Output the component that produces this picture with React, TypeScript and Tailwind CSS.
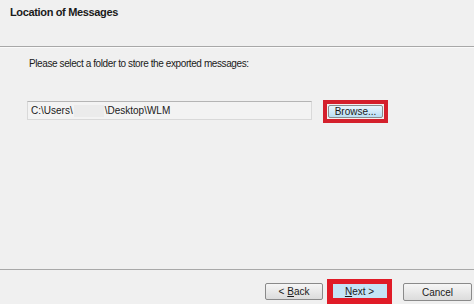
import React from "react";

export default function App() {
  const font = { fontFamily: '"Liberation Sans", Arial, sans-serif' };
  return (
    <div className="w-[474px] h-[304px] bg-[#f0f0f0] flex flex-col overflow-hidden text-[#1a1a1a]" style={font}>
      <div className="h-[47px] bg-[#f0f0f0] border-b border-[#a8a8a8] pl-[10px] pt-[5px]">
        <div className="text-[11px] font-bold leading-[14px] tracking-[-0.35px]">Location of Messages</div>
      </div>
      <div className="border-t border-[#fafafa] flex-1 flex flex-col pl-[29px]">
        <div className="text-[10px] leading-[14px] mt-[9px] tracking-[-0.4px]">Please select a folder to store the exported messages:</div>
        <div className="flex items-start mt-[29px] -ml-[2px]">
          <div className="w-[285px] h-[19px] mt-[1px] border border-[#d9d9d9] border-t-[#b5b5b5] bg-[#f3f3f3] flex items-center pl-[3px] text-[10px]">
            <span>C:\Users\</span>
            <span className="inline-block w-[30px] h-[12px] bg-[#ebebeb] mx-[1px]" />
            <span>\Desktop\WLM</span>
          </div>
          <div className="ml-[11px] border-[4px] border-[#d4202c] p-[1px]">
            <div className="w-[55px] h-[13px] border border-[#8a8a8a] rounded-[2px] bg-gradient-to-b from-[#eaf6fd] to-[#b8def4] flex items-center justify-center text-[10px]">
              Browse...
            </div>
          </div>
        </div>
      </div>
      <div className="h-[35px] border-t border-[#a8a8a8] flex items-start">
        <div className="flex-1" />
        <div className="flex items-start mt-[9px] mr-[2px]">
          <div className="w-[58px] h-[17px] mt-[4px] border border-[#8a8a8a] rounded-[2px] bg-gradient-to-b from-[#f6f6f6] to-[#dcdcdc] flex items-center justify-center text-[10px]">
            &lt; <span className="underline ml-[3px]">B</span>ack
          </div>
          <div className="ml-[4px] w-[65px] h-[26px] bg-[#e01b27] flex items-start justify-center pt-[5px]">
            <div className="w-[54px] h-[14px] bg-[#c5e4f6] flex items-center justify-center text-[10px] text-[#1a1a1a]">
              <span className="underline">N</span>ext &gt;
            </div>
          </div>
          <div className="ml-[11px] w-[69px] h-[18px] mt-[4px] border border-[#8a8a8a] rounded-[2px] bg-gradient-to-b from-[#f6f6f6] to-[#dcdcdc] flex items-center justify-center text-[10px]">
            Cancel
          </div>
        </div>
      </div>
    </div>
  );
}
